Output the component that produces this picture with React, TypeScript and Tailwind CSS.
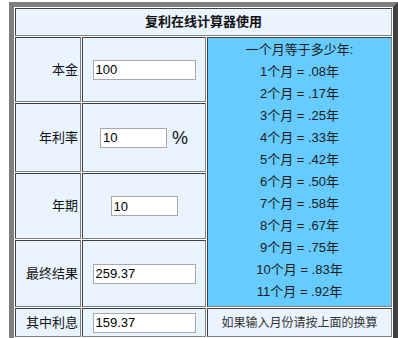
import React from "react";

const cell =
  "bg-[#eaf4ff] border border-t-[#404040] border-l-[#404040] border-b-[#808080] border-r-[#808080]";

const months = [
  "1个月 = .08年",
  "2个月 = .17年",
  "3个月 = .25年",
  "4个月 = .33年",
  "5个月 = .42年",
  "6个月 = .50年",
  "7个月 = .58年",
  "8个月 = .67年",
  "9个月 = .75年",
  "10个月 = .83年",
  "11个月 = .92年",
];

function Input({ value, w }: { value: string; w: string }) {
  return (
    <input
      readOnly
      value={value}
      className={`${w} h-[20px] bg-white border border-[#a9a9a9] px-[2px] text-[13px] text-black outline-none`}
      style={{ fontFamily: '"Liberation Sans", "Noto Sans CJK SC", sans-serif' }}
    />
  );
}

export default function App() {
  return (
    <div
      className="bg-white w-[398px] h-[338px] overflow-hidden pt-[2px] pl-[9px] text-[13px] text-[#111]"
      style={{ fontFamily: '"Liberation Sans", "Noto Sans CJK SC", sans-serif' }}
    >
      <div className="inline-block border-[5px] border-t-[#808080] border-l-[#808080] border-b-[#404040] border-r-[#404040] p-px bg-white">
        <div className="grid grid-cols-[66px_124px_185px] grid-rows-[28px_65px_69px_66px_67px_29px] gap-px">
          <div className={`${cell} col-span-3 flex items-center justify-center font-bold`}>
            复利在线计算器使用
          </div>

          <div className={`${cell} flex items-center justify-end pr-[2px]`}>本金</div>
          <div className={`${cell} flex items-center justify-center`}>
            <Input value="100" w="w-[103px]" />
          </div>
          <div
            className={`row-span-4 bg-[#66ccff] border border-t-[#404040] border-l-[#404040] border-b-[#808080] border-r-[#808080] pt-[1px] flex flex-col items-center text-[#1a1a1a]`}
          >
            <div className="leading-[22px]">一个月等于多少年:</div>
            {months.map((m) => (
              <div key={m} className="leading-[22px]">
                {m}
              </div>
            ))}
          </div>

          <div className={`${cell} flex items-center justify-end pr-[2px]`}>年利率</div>
          <div className={`${cell} flex items-center justify-center gap-[5px]`}>
            <Input value="10" w="w-[67px]" />
            <span className="text-[18px] leading-none text-[#111]">%</span>
          </div>

          <div className={`${cell} flex items-center justify-end pr-[2px]`}>年期</div>
          <div className={`${cell} flex items-center justify-center`}>
            <Input value="10" w="w-[67px]" />
          </div>

          <div className={`${cell} flex items-center justify-end pr-[2px]`}>最终结果</div>
          <div className={`${cell} flex items-center justify-center`}>
            <Input value="259.37" w="w-[103px]" />
          </div>

          <div className={`${cell} flex items-center justify-end pr-[2px]`}>其中利息</div>
          <div className={`${cell} flex items-center justify-center`}>
            <Input value="159.37" w="w-[103px]" />
          </div>
          <div className={`${cell} flex items-center justify-center text-[12px] text-[#333]`}>
            如果输入月份请按上面的换算
          </div>
        </div>
      </div>
    </div>
  );
}
